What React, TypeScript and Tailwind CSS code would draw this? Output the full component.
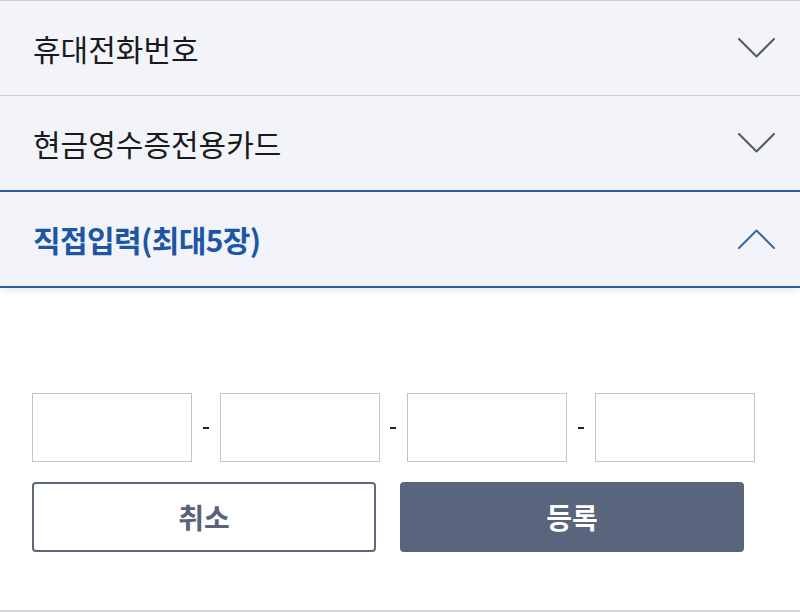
import React from "react";

const font = { fontFamily: '"Noto Sans CJK KR", "Noto Sans", sans-serif' };

function Chevron({ up, color }: { up?: boolean; color: string }) {
  return (
    <svg width="37" height="20" viewBox="0 0 37 20" fill="none">
      <path
        d={up ? "M1 19 L18.5 1.5 L36 19" : "M1 1 L18.5 18.5 L36 1"}
        stroke={color}
        strokeWidth="2"
        strokeLinecap="round"
        strokeLinejoin="round"
      />
    </svg>
  );
}

function Row({
  label,
  active,
  borderClass,
}: {
  label: string;
  active?: boolean;
  borderClass: string;
}) {
  return (
    <div
      className={`flex items-center justify-between pl-[33px] pr-[25px] bg-[#f2f4fa] border-b ${borderClass}`}
    >
      <span
        className={`text-[30px] leading-none ${
          active ? "text-[#1d56a3] font-bold tracking-[-0.6px]" : "text-[#1a1a1a]"
        }`}
      >
        {label}
      </span>
      <Chevron up={active} color={active ? "#3a679f" : "#555a60"} />
    </div>
  );
}

export default function App() {
  return (
    <div className="w-[800px] h-[612px] bg-white flex flex-col overflow-hidden" style={font}>
      <div className="border-t border-[#c9cedb]">
        <Row label="휴대전화번호" borderClass="border-[#c6ccda] h-[95px]" />
        <Row label="현금영수증전용카드" borderClass="border-[#2f5d95] border-b-2 h-[96px]" />
        <div className="shadow-[0_3px_6px_rgba(0,0,0,0.08)] relative">
          <Row label="직접입력(최대5장)" active borderClass="border-[#2f5d95] border-b-2 h-[96px]" />
        </div>
      </div>
      <div className="flex-1 flex flex-col pl-[32px] pt-[105px] border-b-2 border-[#d4d6da]">
        <div className="flex items-center">
          {[0, 1, 2, 3].map((i) => (
            <React.Fragment key={i}>
              {i > 0 && (
                <div className="w-[27.5px] flex justify-center">
                  <div className="w-[6px] h-[2px] bg-[#222]" />
                </div>
              )}
              <div className="w-[160px] h-[69px] border border-[#c4c4c4] bg-white" />
            </React.Fragment>
          ))}
        </div>
        <div className="flex gap-[24px] mt-[20px]">
          <button className="w-[344px] h-[70px] rounded-[4px] border-2 border-[#5f6878] bg-white text-[#58627a] text-[28px] font-bold flex items-center justify-center">
            취소
          </button>
          <button className="w-[344px] h-[70px] rounded-[4px] bg-[#58657d] text-white text-[28px] font-bold flex items-center justify-center">
            등록
          </button>
        </div>
      </div>
    </div>
  );
}
